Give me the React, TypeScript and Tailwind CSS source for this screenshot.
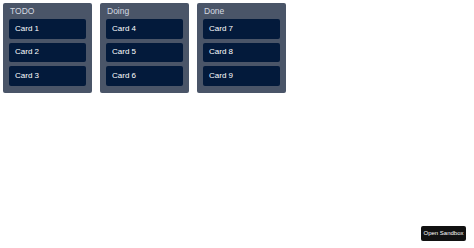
import React from "react";

const columns = [
  { title: "TODO", cards: ["Card 1", "Card 2", "Card 3"] },
  { title: "Doing", cards: ["Card 4", "Card 5", "Card 6"] },
  { title: "Done", cards: ["Card 7", "Card 8", "Card 9"] },
];

export default function App() {
  return (
    <div
      className="relative w-[474px] h-[248px] bg-white overflow-hidden"
      style={{ fontFamily: '"Liberation Sans", Arial, sans-serif' }}
    >
      <div className="flex gap-[8px] pl-[3px] pt-[3px]">
        {columns.map((col) => (
          <div
            key={col.title}
            className="w-[89px] h-[90px] bg-[#4a5568] rounded-[2px] px-[6px] pt-[3px] flex flex-col"
          >
            <div className="text-[8.5px] leading-[11px] text-[#d5dae2] pl-[1px] h-[11px]">
              {col.title}
            </div>
            <div className="flex flex-col gap-[4px] mt-[2px]">
              {col.cards.map((c) => (
                <div
                  key={c}
                  className="h-[19.5px] bg-[#031a3b] rounded-[2px] text-white text-[8px] flex items-center pl-[6px]"
                >
                  {c}
                </div>
              ))}
            </div>
          </div>
        ))}
      </div>
      <div className="absolute left-[421px] top-[226px] w-[45px] h-[15px] bg-[#111111] rounded-[2px] text-white text-[6px] flex items-center justify-center whitespace-nowrap">
        Open Sandbox
      </div>
    </div>
  );
}
